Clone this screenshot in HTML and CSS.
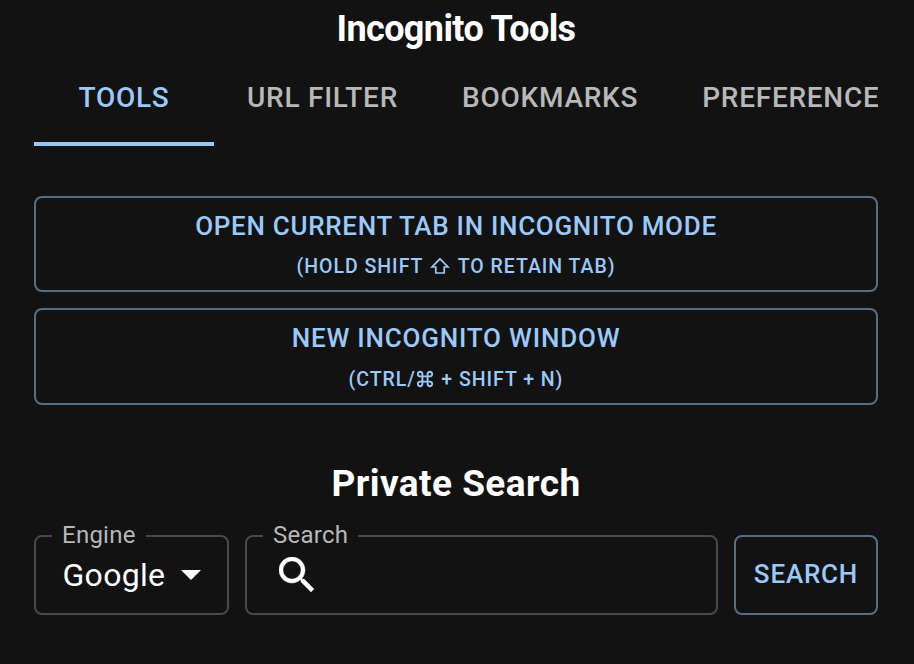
FILE: index.html
```html
<!DOCTYPE html>
<html lang="en">
<head>
<meta charset="utf-8">
<title>Incognito Tools</title>
<link rel="stylesheet" href="styles.css">
</head>
<body>
<main class="popup">
  <h1 class="title">Incognito Tools</h1>
  <nav class="tabs">
    <button class="tab tab-active">TOOLS</button>
    <button class="tab">URL FILTER</button>
    <button class="tab">BOOKMARKS</button>
    <button class="tab">PREFERENCES</button>
  </nav>
  <section class="actions">
    <button class="outlined action"><span class="label label-wide">OPEN CURRENT TAB IN INCOGNITO MODE</span>
      <small class="hint">(HOLD SHIFT <svg class="shift" viewBox="0 0 20 18"><path d="M10 1.8 18 10h-3.8v6H5.8v-6H2Z"/></svg> TO RETAIN TAB)</small></button>
    <button class="outlined action action-window"><span class="label">NEW INCOGNITO WINDOW</span>
      <small class="hint">(CTRL/<svg class="command" viewBox="0 0 18 18"><path d="M6.4 6.4h5.2v5.2H6.4ZM6.4 6.4H4.2a2.3 2.3 0 1 1 2.2-2.2ZM11.6 6.4V4.2a2.3 2.3 0 1 1 2.2 2.2ZM11.6 11.6h2.2a2.3 2.3 0 1 1-2.2 2.2ZM6.4 11.6v2.2a2.3 2.3 0 1 1-2.2-2.2Z"/></svg> + SHIFT + N)</small></button>
  </section>
  <h2 class="subtitle">Private Search</h2>
  <form class="search-row">
    <fieldset class="field engine"><legend>Engine</legend><div class="value">Google<svg class="arrow" viewBox="0 0 20 10"><path d="M0 0h20L10 10Z"/></svg></div></fieldset>
    <fieldset class="field query"><legend>Search</legend><div class="value"><svg class="magnifier" viewBox="3 3 17.49 17.49"><path d="M15.5 14h-.79l-.28-.27C15.41 12.59 16 11.11 16 9.5 16 5.91 13.09 3 9.5 3S3 5.91 3 9.5 5.91 16 9.5 16c1.61 0 3.09-.59 4.23-1.57l.27.28v.79l5 4.99L20.49 19l-4.99-5zm-6 0C7.01 14 5 11.99 5 9.5S7.01 5 9.5 5 14 7.01 14 9.5 11.99 14 9.5 14z"/></svg></div></fieldset>
    <button class="outlined submit" type="button">SEARCH</button>
  </form>
</main>
</body>
</html>
```
FILE: styles.css
```css
* { box-sizing: border-box; }
body { margin: 0; background: #121212; color: #fff; font-family: Roboto, sans-serif; overflow: hidden; }
button { font: 500 26px/46px Roboto, sans-serif; background: none; border: 0; padding: 0; color: #9bc9f8; white-space: nowrap; }
.popup { width: 914px; height: 664px; padding: 4px 36px 0 34px; }
.title, .subtitle { margin: 0; font-weight: 700; text-align: center; }
.title { font-size: 36px; line-height: 50px; letter-spacing: -.6px; }
.tabs { display: flex; height: 96px; margin-top: -4px; overflow: hidden; }
.tab { flex: none; height: 96px; padding: 0 32px; line-height: 94px; letter-spacing: .74px; font-size: 28px; color: #b8b8b8; }
.tab-active { width: 181px; padding: 0 33px 0 32px; color: #9bc9f8; background: linear-gradient(#9bc9f8, #9bc9f8) 0 100% / 180px 4px no-repeat; }
.actions { display: flex; flex-direction: column; gap: 16px; margin-top: 50px; }
.outlined { border: 2px solid #566e86; border-radius: 8px; }
.action { display: flex; flex-direction: column; align-items: center; height: 96px; padding-top: 6px; letter-spacing: .8px; }
.action-window { height: 97px; }
.label { line-height: 44px; }
.label-wide { letter-spacing: .7px; }
.hint { display: flex; align-items: center; margin-top: 1px; font-size: 19.5px; line-height: 36px; letter-spacing: .98px; white-space: pre; }
.action-window .hint { margin-top: 2px; }
.shift { width: 20px; height: 18px; margin: 0 2px 2px 1.5px; fill: none; stroke: currentColor; stroke-width: 1.7; }
.command { width: 18px; height: 18px; margin: 0 1px 2px .5px; fill: none; stroke: currentColor; stroke-width: 1.9; }
.subtitle { margin-top: 54px; font-size: 37px; line-height: 50px; letter-spacing: .45px; }
.search-row { display: flex; gap: 16px; margin-top: 14px; }
.field { height: 92px; margin: 0; padding: 0 0 0 16px; border: 2px solid #494949; border-radius: 8px; min-width: 0; }
.field legend { height: 26px; padding: 0 10px; font-size: 24px; line-height: 24px; letter-spacing: .25px; color: #b8b8b8; }
.engine { width: 195px; }
.query { width: 473px; }
.value { display: flex; align-items: center; height: 52px; padding-left: 10.5px; font-size: 32px; letter-spacing: .3px; }
.arrow { width: 20px; height: 10px; margin-left: 15.5px; fill: #fff; }
.magnifier { width: 35px; height: 35px; margin: 0 0 2px 5.5px; fill: #fff; stroke: #fff; stroke-width: .2; }
.submit { width: 144px; height: 80px; margin-top: 12px; padding-bottom: 2px; letter-spacing: .8px; }
```
